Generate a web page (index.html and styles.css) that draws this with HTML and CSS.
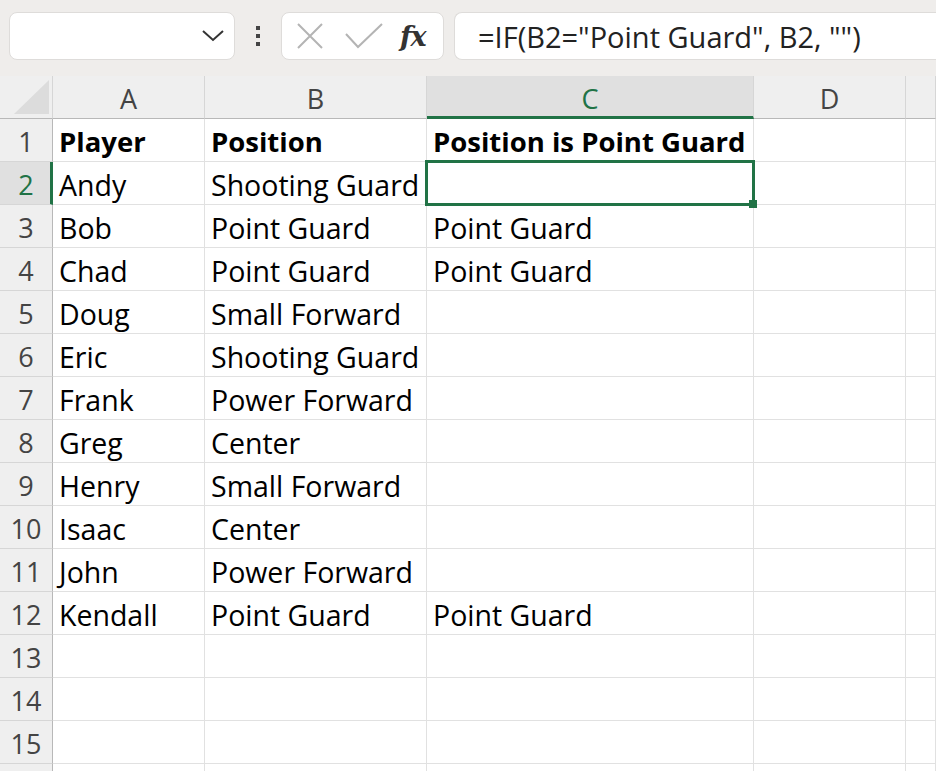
FILE: index.html
```html
<!DOCTYPE html>
<html lang="en">
<head>
  <meta charset="UTF-8" />
  <title>Position is Point Guard</title>
  <link rel="stylesheet" href="styles.css">
</head>
<body>
  <div class="toolbar">
    <div class="name-box">
      <svg class="chevron" width="22" height="12" viewBox="0 0 22 12"><path d="M1 1 L11 10 L21 1" fill="none" stroke="#333" stroke-width="2"/></svg>
    </div>
    <div class="dots"><span></span><span></span><span></span></div>
    <div class="fx-box">
      <svg width="28" height="28" viewBox="0 0 28 28"><path d="M2 2 L26 26 M26 2 L2 26" stroke="#b4b4b4" stroke-width="2" fill="none"/></svg>
      <svg width="38" height="28" viewBox="0 0 38 28"><path d="M1 12 L13 25 L37 2" stroke="#b4b4b4" stroke-width="2" fill="none"/></svg>
      <span class="fx">fx</span>
    </div>
    <div class="formula">=IF(B2="Point Guard", B2, "")</div>
  </div>

  <div class="sheet">
    <div class="corner"><div class="tri"></div></div>
    <div class="col-head">A</div>
    <div class="col-head">B</div>
    <div class="col-head active">C</div>
    <div class="col-head">D</div>
    <div class="col-head"></div>

    <div class="row-head">1</div>
    <div class="cell bold">Player</div>
    <div class="cell bold">Position</div>
    <div class="cell bold">Position is Point Guard</div>
    <div class="cell"></div><div class="cell"></div>

    <div class="row-head active">2</div>
    <div class="cell">Andy</div>
    <div class="cell">Shooting Guard</div>
    <div class="cell selected"><span class="handle"></span></div>
    <div class="cell"></div><div class="cell"></div>

    <div class="row-head">3</div>
    <div class="cell">Bob</div>
    <div class="cell">Point Guard</div>
    <div class="cell">Point Guard</div>
    <div class="cell"></div><div class="cell"></div>

    <div class="row-head">4</div>
    <div class="cell">Chad</div>
    <div class="cell">Point Guard</div>
    <div class="cell">Point Guard</div>
    <div class="cell"></div><div class="cell"></div>

    <div class="row-head">5</div>
    <div class="cell">Doug</div>
    <div class="cell">Small Forward</div>
    <div class="cell"></div><div class="cell"></div><div class="cell"></div>

    <div class="row-head">6</div>
    <div class="cell">Eric</div>
    <div class="cell">Shooting Guard</div>
    <div class="cell"></div><div class="cell"></div><div class="cell"></div>

    <div class="row-head">7</div>
    <div class="cell">Frank</div>
    <div class="cell">Power Forward</div>
    <div class="cell"></div><div class="cell"></div><div class="cell"></div>

    <div class="row-head">8</div>
    <div class="cell">Greg</div>
    <div class="cell">Center</div>
    <div class="cell"></div><div class="cell"></div><div class="cell"></div>

    <div class="row-head">9</div>
    <div class="cell">Henry</div>
    <div class="cell">Small Forward</div>
    <div class="cell"></div><div class="cell"></div><div class="cell"></div>

    <div class="row-head">10</div>
    <div class="cell">Isaac</div>
    <div class="cell">Center</div>
    <div class="cell"></div><div class="cell"></div><div class="cell"></div>

    <div class="row-head">11</div>
    <div class="cell">John</div>
    <div class="cell">Power Forward</div>
    <div class="cell"></div><div class="cell"></div><div class="cell"></div>

    <div class="row-head">12</div>
    <div class="cell">Kendall</div>
    <div class="cell">Point Guard</div>
    <div class="cell">Point Guard</div>
    <div class="cell"></div><div class="cell"></div>

    <div class="row-head">13</div>
    <div class="cell"></div><div class="cell"></div><div class="cell"></div><div class="cell"></div><div class="cell"></div>

    <div class="row-head">14</div>
    <div class="cell"></div><div class="cell"></div><div class="cell"></div><div class="cell"></div><div class="cell"></div>

    <div class="row-head">15</div>
    <div class="cell"></div><div class="cell"></div><div class="cell"></div><div class="cell"></div><div class="cell"></div>

    <div class="row-head"></div>
    <div class="cell"></div><div class="cell"></div><div class="cell"></div><div class="cell"></div><div class="cell"></div>
  </div>
</body>
</html>
```

FILE: styles.css
```css
* {
    margin: 0;
    padding: 0;
    box-sizing: border-box;
}

body {
    font-family: "Open Sans", "Noto Sans", sans-serif;
    background: #fff;
    width: 936px;
    height: 771px;
    overflow: hidden;
}

.toolbar {
    height: 76px;
    background: #efedeb;
    display: flex;
    align-items: center;
    padding: 0 0 4px 9px;
}

.name-box {
    width: 226px;
    height: 48px;
    background: #fff;
    border: 1px solid #dedcda;
    border-radius: 8px;
    display: flex;
    align-items: center;
    justify-content: flex-end;
    padding-right: 10px;
}

.dots {
    width: 46px;
    display: flex;
    flex-direction: column;
    align-items: center;
    gap: 4px;
}

.dots span {
    width: 4px;
    height: 4px;
    background: #444;
}

.fx-box {
    width: 163px;
    height: 48px;
    background: #fff;
    border: 1px solid #dedcda;
    border-radius: 8px;
    display: flex;
    align-items: center;
    padding-left: 14px;
    gap: 21px;
}

.fx {
    font-family: "DejaVu Serif", "Liberation Serif", serif;
    font-style: italic;
    font-weight: bold;
    font-size: 27px;
    color: #333;
    margin-left: -4px;
    letter-spacing: -1px;
}

.formula {
    flex: 1;
    margin-left: 10px;
    height: 48px;
    background: #fff;
    border: 1px solid #dedcda;
    border-right: none;
    border-radius: 8px 0 0 8px;
    font-size: 29px;
    color: #222;
    display: flex;
    align-items: center;
    padding-left: 23px;
}

.sheet {
    display: grid;
    grid-template-columns: 53px 152px 222px 327px 152px 30px;
    grid-auto-rows: 43px;
}

.corner {
    background: #efefef;
    border-right: 1px solid #d6d6d6;
    border-bottom: 1px solid #b8b8b8;
    position: relative;
}

.tri {
    position: absolute;
    left: 14px;
    top: 4px;
    width: 35px;
    height: 34px;
    background: #dcdcdc;
    clip-path: polygon(100% 0, 100% 100%, 0 100%);
}

.col-head {
    background: #efefef;
    border-right: 1px solid #d6d6d6;
    border-bottom: 1px solid #b8b8b8;
    display: flex;
    align-items: center;
    justify-content: center;
    font-size: 27px;
    color: #444;
    padding-top: 2px;
}

.col-head.active {
    background: #e0e0e0;
    color: #217346;
    border-bottom: 3px solid #217346;
    padding-top: 4px;
}

.row-head {
    background: #efefef;
    border-right: 1px solid #b8b8b8;
    border-bottom: 1px solid #d6d6d6;
    display: flex;
    align-items: center;
    justify-content: center;
    font-size: 27px;
    color: #444;
    padding-top: 2px;
}

.row-head.active {
    background: #e0e0e0;
    color: #217346;
    border-right: 3px solid #217346;
    padding-left: 2px;
}

.cell {
    border-right: 1px solid #e1e1e1;
    border-bottom: 1px solid #e1e1e1;
    display: flex;
    align-items: center;
    padding: 3px 0 0 6px;
    font-size: 28.5px;
    color: #000;
    white-space: nowrap;
    overflow: visible;
}

.cell.bold {
    font-weight: bold;
    font-size: 27.5px;
}

.cell.selected {
    position: relative;
}

.cell.selected::before {
    content: "";
    position: absolute;
    left: -2px;
    top: -2px;
    right: -2px;
    bottom: -2px;
    border: 3px solid #217346;
}

.handle {
    position: absolute;
    right: -4px;
    bottom: -4px;
    width: 8px;
    height: 8px;
    background: #217346;
    z-index: 1;
}
```
